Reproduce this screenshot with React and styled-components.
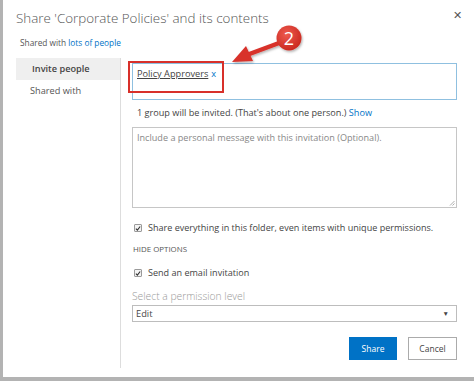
import React from "react";
import styled, { createGlobalStyle } from "styled-components";

const GlobalStyle = createGlobalStyle`
  html, body {
    margin: 0;
    padding: 0;
    background: #ffffff;
  }
  * {
    box-sizing: border-box;
  }
`;

const Frame = styled.div`
  position: relative;
  width: 474px;
  height: 381px;
  background: #ffffff;
  border-left: 3px solid #b3b3b3;
  border-bottom: 4px solid #b3b3b3;
  font-family: "Open Sans", "Noto Sans", sans-serif;
  color: #444444;
  overflow: hidden;
`;

const Header = styled.div`
  display: flex;
  align-items: flex-start;
  justify-content: space-between;
  padding: 7px 12px 0 13px;
`;

const Title = styled.h1`
  margin: 0;
  font-size: 13.4px;
  font-weight: 300;
  line-height: 22px;
  color: #555555;
`;

const Close = styled.span`
  font-size: 11px;
  line-height: 14px;
  color: #555555;
  margin-top: 1px;
`;

const SharedLine = styled.div`
  padding: 8px 0 0 17px;
  font-size: 8.3px;
  line-height: 12px;
  color: #555555;
`;

const Link = styled.span`
  color: #0072c6;
`;

const Body = styled.div`
  display: flex;
  margin-top: 9px;
  padding-left: 13px;
`;

const Nav = styled.div`
  width: 105px;
  height: 310px;
  border-right: 1px solid #dddddd;
`;

const NavItem = styled.div`
  height: 22px;
  line-height: 22px;
  font-size: ${p => (p.active ? "9.2px" : "9.2px")};
  padding-left: ${p => (p.active ? "16px" : "14px")};
  font-weight: ${p => (p.active ? 600 : 400)};
  background: ${p => (p.active ? "#efefef" : "transparent")};
  color: ${p => (p.active ? "#444444" : "#555555")};
`;

const Main = styled.div`
  flex: 1;
  padding: 5px 17px 0 11px;
  display: flex;
  flex-direction: column;
`;

const PeopleBox = styled.div`
  height: 37px;
  border: 1px solid #8fc0e0;
  padding: 4px 4px;
  font-size: 9.2px;
  line-height: 12px;
`;

const Token = styled.span`
  color: #444444;
  text-decoration: underline;
`;

const Remove = styled.span`
  color: #0072c6;
  margin-left: 3px;
`;

const Info = styled.div`
  margin-top: 7px;
  font-size: 9.15px;
  line-height: 12px;
  color: #444444;
  padding-left: 5px;
`;

const Message = styled.div`
  position: relative;
  margin-top: 8px;
  height: 81px;
  border: 1px solid #c6c6c6;
  padding: 4px 4px;
  font-size: 9.1px;
  line-height: 12px;
  color: #888888;
`;

const Grip = styled.svg`
  position: absolute;
  right: 1px;
  bottom: 1px;
`;

const CheckRow = styled.label`
  display: flex;
  align-items: center;
  gap: 6px;
  margin-top: ${p => p.$top}px;
  font-size: 9.05px;
  line-height: 14px;
  color: #444444;
  padding-left: 2px;
`;

const Box = styled.span`
  width: 8px;
  height: 8px;
  border: 1px solid #9a9a9a;
  border-radius: 1px;
  background: #f4f4f4;
  display: flex;
  align-items: center;
  justify-content: center;
`;

const Options = styled.div`
  margin-top: 8px;
  font-size: 7.9px;
  line-height: 12px;
  color: #555555;
  padding-left: 1px;
`;

const LevelLabel = styled.div`
  margin-top: 9px;
  font-size: 10.3px;
  font-weight: 300;
  line-height: 14px;
  color: #999999;
`;

const Select = styled.div`
  margin-top: 2px;
  height: 17px;
  border: 1px solid #bdbdbd;
  display: flex;
  align-items: center;
  justify-content: space-between;
  padding: 0 7px 0 3px;
  font-size: 9.3px;
  color: #444444;
`;

const Caret = styled.span`
  font-size: 6.5px;
  color: #444444;
`;

const Actions = styled.div`
  display: flex;
  justify-content: flex-end;
  gap: 11px;
  margin-top: 15px;
`;

const Button = styled.div`
  width: ${p => p.$w}px;
  height: 23px;
  display: flex;
  align-items: center;
  justify-content: center;
  font-size: 8.5px;
  background: ${p => (p.$primary ? "#0072c6" : "#ffffff")};
  color: ${p => (p.$primary ? "#ffffff" : "#444444")};
  border: 1px solid ${p => (p.$primary ? "#0072c6" : "#ababab")};
`;

const Overlay = styled.svg`
  position: absolute;
  left: -3px;
  top: 0;
  pointer-events: none;
`;

const Check = () => (
  <Box>
    <svg width="7" height="7" viewBox="0 0 7 7">
      <path d="M1 3.6 L2.8 5.4 L6 1.2" fill="none" stroke="#333" strokeWidth="1.3" />
    </svg>
  </Box>
);

export default function App() {
  return (
    <>
      <GlobalStyle />
      <Frame>
        <Header>
          <Title>Share 'Corporate Policies' and its contents</Title>
          <Close>✕</Close>
        </Header>
        <SharedLine>
          Shared with <Link>lots of people</Link>
        </SharedLine>
        <Body>
          <Nav>
            <NavItem active>Invite people</NavItem>
            <NavItem>Shared with</NavItem>
          </Nav>
          <Main>
            <PeopleBox>
              <Token>Policy Approvers</Token>
              <Remove>x</Remove>
            </PeopleBox>
            <Info>
              1 group will be invited. (That's about one person.) <Link>Show</Link>
            </Info>
            <Message>
              Include a personal message with this invitation (Optional).
              <Grip width="6" height="6" viewBox="0 0 6 6">
                <path d="M5.5 1 L1 5.5 M5.5 3.5 L3.5 5.5" stroke="#999" strokeWidth="0.8" />
              </Grip>
            </Message>
            <CheckRow $top={13}>
              <Check />
              Share everything in this folder, even items with unique permissions.
            </CheckRow>
            <Options>HIDE OPTIONS</Options>
            <CheckRow $top={11}>
              <Check />
              Send an email invitation
            </CheckRow>
            <LevelLabel>Select a permission level</LevelLabel>
            <Select>
              Edit
              <Caret>▼</Caret>
            </Select>
            <Actions>
              <Button $primary $w={48}>Share</Button>
              <Button $w={49}>Cancel</Button>
            </Actions>
          </Main>
        </Body>
        <Overlay width="474" height="381" viewBox="0 0 474 381">
          <defs>
            <radialGradient id="dot" cx="40%" cy="35%" r="70%">
              <stop offset="0%" stopColor="#ee5a4f" />
              <stop offset="100%" stopColor="#c9261d" />
            </radialGradient>
            <filter id="shade" x="-20%" y="-20%" width="140%" height="140%">
              <feDropShadow dx="1" dy="1.5" stdDeviation="1.2" floodColor="#000" floodOpacity="0.3" />
            </filter>
          </defs>
          <rect x="129" y="62" width="94" height="30" fill="none" stroke="#d8302a" strokeWidth="2" />
          <g filter="url(#shade)">
            <path d="M279 43 L244 56" stroke="#d8302a" strokeWidth="4.5" strokeLinecap="round" />
            <path d="M232 62 L246 46 L253 61 Z" fill="#d8302a" />
            <circle cx="289" cy="38" r="12.5" fill="url(#dot)" />
          </g>
          <text x="289" y="44.5" textAnchor="middle" fontFamily="Open Sans, sans-serif" fontSize="18" fill="#ffffff">2</text>
        </Overlay>
      </Frame>
    </>
  );
}
